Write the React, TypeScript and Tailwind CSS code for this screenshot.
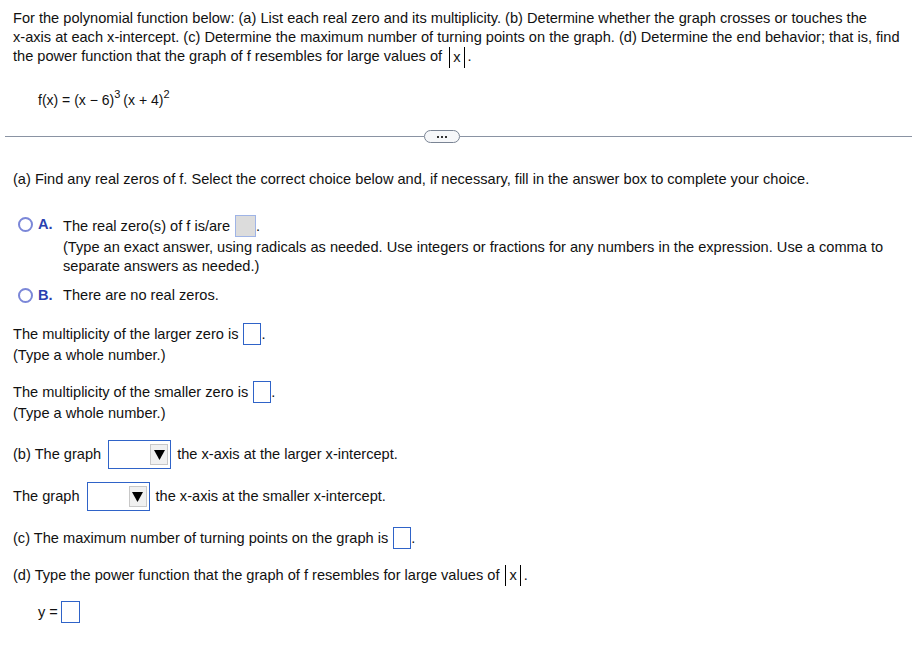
import React from 'react'

function Box({ className = '' }: { className?: string }) {
  return <span className={`inline-block align-middle border border-[#2f63c8] bg-white ${className}`} />
}

function Abs() {
  return (
    <span className="inline-flex items-center align-middle">
      <span className="inline-block w-px h-[21px] bg-black mx-[3px]" />
      <span>x</span>
      <span className="inline-block w-px h-[21px] bg-black mx-[3px]" />
    </span>
  )
}

function Radio() {
  return <span className="inline-block w-[15px] h-[15px] rounded-full border-2 border-[#7b87d8] bg-white" />
}

function Select({ w }: { w: string }) {
  return (
    <span className={`inline-flex items-stretch border border-[#2f63c8] bg-white h-[29px] ${w} align-middle`}>
      <span className="flex-1" />
      <span className="w-[18px] my-[3px] mr-[2px] border border-[#c8c8c8] bg-[#f0f0f0] flex items-start justify-center pt-[5px]">
        <svg width="11" height="10" viewBox="0 0 11 10">
          <polygon points="0,0 11,0 5.5,10" fill="#000" />
        </svg>
      </span>
    </span>
  )
}

export default function App() {
  return (
    <div className="min-h-screen bg-white text-[#111] text-[14.6px] leading-[19px] font-['Liberation_Sans',Arial,sans-serif]">
      <div className="pl-[13px] pr-[24px] pt-[9px]">
        <p>
          For the polynomial function below: (a) List each real zero and its multiplicity. (b) Determine whether the graph crosses or touches the <span className="whitespace-nowrap">x-axis</span> at each <span className="whitespace-nowrap">x-intercept</span>. (c) Determine the maximum number of turning points on the graph. (d) Determine the end behavior; that is, find the power function that the graph of f resembles for large values of <Abs />.
        </p>
        <div className="mt-[23px] ml-[25px] text-[14px]">
          f(x) = (x − 6)<sup className="text-[11px] -top-[0.6em] mr-[3px]">3</sup>(x + 4)<sup className="text-[11px] -top-[0.6em]">2</sup>
        </div>
      </div>

      <div className="flex items-center mt-[20px] pl-[5px] pr-[12px]">
        <div className="w-[419px] h-px bg-[#8a93a3]" />
        <div className="w-[36px] h-[13px] rounded-full border border-[#7a8494] bg-[#f6f7f9] flex items-center justify-center gap-[2px]">
          <span className="w-[2px] h-[2px] bg-[#333]" />
          <span className="w-[2px] h-[2px] bg-[#333]" />
          <span className="w-[2px] h-[2px] bg-[#333]" />
        </div>
        <div className="flex-1 h-px bg-[#8a93a3]" />
      </div>

      <div className="pl-[13px] pr-[24px]">
        <p className="mt-[27px]">(a) Find any real zeros of f. Select the correct choice below and, if necessary, fill in the answer box to complete your choice.</p>

        <div className="mt-[26px] flex pl-[5px]">
          <div className="w-[20px] pt-[2px]"><Radio /></div>
          <div className="w-[25px] font-bold text-[#2a3fb0]">A.</div>
          <div className="flex-1">
            <div className="flex items-center">
              The real zero(s) of f is/are <span className="inline-block ml-[5px] w-[21px] h-[22px] border border-[#9fb4e6] bg-[#dcdcdc]" />.
            </div>
            <p className="mt-[1px]">(Type an exact answer, using radicals as needed. Use integers or fractions for any numbers in the expression. Use a comma to separate answers as needed.)</p>
          </div>
        </div>

        <div className="mt-[10px] flex pl-[5px]">
          <div className="w-[20px] pt-[2px]"><Radio /></div>
          <div className="w-[25px] font-bold text-[#2a3fb0]">B.</div>
          <div>There are no real zeros.</div>
        </div>

        <div className="mt-[15px] flex items-center">
          The multiplicity of the larger zero is <Box className="ml-[5px] w-[18px] h-[22px]" />.
        </div>
        <p className="mt-[1px]">(Type a whole number.)</p>

        <div className="mt-[16px] flex items-center">
          The multiplicity of the smaller zero is <Box className="ml-[5px] w-[18px] h-[22px]" />.
        </div>
        <p className="mt-[1px]">(Type a whole number.)</p>

        <div className="mt-[17px] flex items-center">
          (b) The graph <span className="ml-[7px] mr-[6px]"><Select w="w-[63px]" /></span> the x-axis at the larger x-intercept.
        </div>

        <div className="mt-[13px] flex items-center">
          The graph <span className="ml-[7px] mr-[6px]"><Select w="w-[63px]" /></span> the x-axis at the smaller x-intercept.
        </div>

        <div className="mt-[16px] flex items-center">
          (c) The maximum number of turning points on the graph is <Box className="ml-[5px] w-[18px] h-[22px]" />.
        </div>

        <div className="mt-[16px] flex items-center">
          (d) Type the power function that the graph of f resembles for large values of <span className="ml-[3px]"><Abs /></span>.
        </div>

        <div className="mt-[15px] ml-[25px] flex items-center">
          y = <Box className="ml-[3px] w-[19px] h-[22px]" />
        </div>
      </div>
    </div>
  )
}
